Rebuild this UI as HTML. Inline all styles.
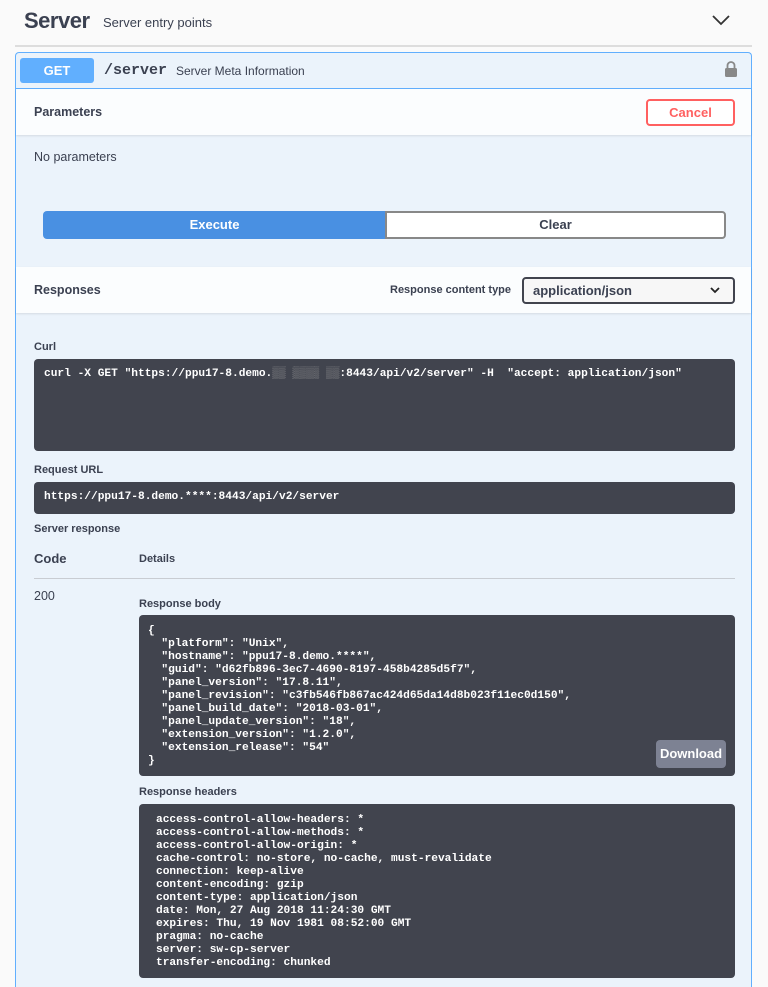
<!DOCTYPE html>
<html style="height:987px;overflow:hidden"><head><meta charset="utf-8"><style>
*{margin:0;padding:0;box-sizing:border-box}
body{width:768px;height:987px;background:#fafafa;font-family:"Liberation Sans",sans-serif;color:#3b4151;position:relative;overflow:hidden}
.a{position:absolute}
.mono{font-family:"Liberation Mono",monospace;font-weight:bold;font-size:11.2px;color:#fff;white-space:pre;line-height:13px}
.lbl{font-size:11.5px;font-weight:bold;color:#3b4151}
.box{background:#41444e;border-radius:4px}
</style></head><body>
<div class="a" style="left:24px;top:8px;font-size:22px;font-weight:bold;letter-spacing:-0.5px">Server</div>
<div class="a" style="left:103px;top:15px;font-size:13px">Server entry points</div>
<svg class="a" style="left:711px;top:13px" width="20" height="14"><path d="M2 3 L10 11 L18 3" fill="none" stroke="#333" stroke-width="1.8"/></svg>
<div class="a" style="left:15px;top:45px;width:737px;height:2px;background:#ddd"></div>
<div class="a" style="left:15px;top:52px;width:737px;height:935px;background:#ebf3fb;border:1px solid #61affe;border-bottom:none;border-radius:4px 4px 0 0"></div>
<div class="a" style="left:16px;top:88px;width:735px;height:1px;background:#61affe"></div>
<div class="a" style="left:20px;top:58px;width:74px;height:25px;background:#61affe;border-radius:3px;color:#fff;font-weight:bold;font-size:13px;text-align:center;line-height:25px">GET</div>
<div class="a" style="left:104px;top:62px;font-family:'Liberation Mono',monospace;font-weight:bold;font-size:15px">/server</div>
<div class="a" style="left:176px;top:64px;font-size:12px">Server Meta Information</div>
<svg class="a" style="left:724px;top:60px" width="14" height="18"><path d="M3.5 9 V5.5 A3.5 3.5 0 0 1 10.5 5.5 V9" fill="none" stroke="#888" stroke-width="1.8"/><rect x="1" y="8" width="12" height="9" rx="1.5" fill="#888"/></svg>
<div class="a" style="left:16px;top:89px;width:735px;height:46px;background:rgba(255,255,255,.8);box-shadow:0 1px 2px rgba(0,0,0,.1)"></div>
<div class="a lbl" style="left:34px;top:105px;font-size:12.5px">Parameters</div>
<div class="a" style="left:646px;top:99px;width:89px;height:27px;border:2px solid #ff6060;border-radius:4px;color:#ff6060;font-weight:bold;font-size:13px;text-align:center;line-height:23px;background:#fff">Cancel</div>
<div class="a" style="left:34px;top:150px;font-size:12.5px">No parameters</div>
<div class="a" style="left:43px;top:211px;width:343px;height:28px;background:#4990e2;border-radius:4px 0 0 4px;color:#fff;font-weight:bold;font-size:13px;text-align:center;line-height:28px">Execute</div>
<div class="a" style="left:385px;top:211px;width:341px;height:28px;background:#fff;border:2px solid #888;border-radius:0 4px 4px 0;color:#3b4151;font-weight:bold;font-size:13px;text-align:center;line-height:24px">Clear</div>
<div class="a" style="left:16px;top:267px;width:735px;height:46px;background:rgba(255,255,255,.8);box-shadow:0 1px 2px rgba(0,0,0,.1)"></div>
<div class="a lbl" style="left:34px;top:283px;font-size:12.5px">Responses</div>
<div class="a" style="left:390px;top:284px;font-size:11px;font-weight:bold">Response content type</div>
<div class="a" style="left:522px;top:277px;width:213px;height:27px;border:2px solid #41444e;border-radius:4px;background:#f7f7f7;font-size:13px;font-weight:bold;padding-left:9px;line-height:23px">application/json</div>
<svg class="a" style="left:709px;top:286px" width="12" height="8"><path d="M2 2 L6 6 L10 2" fill="none" stroke="#222" stroke-width="1.8"/></svg>
<div class="a lbl" style="left:34px;top:341px;font-size:11px">Curl</div>
<div class="a box" style="left:34px;top:359px;width:701px;height:92px"></div>
<div class="a mono" style="left:44px;top:368px">curl -X GET "https://ppu17-8.demo.<span style="color:#999">▒▒ ▒▒▒▒ ▒▒</span>:8443/api/v2/server" -H  "accept: application/json"</div>
<div class="a lbl" style="left:34px;top:464px;font-size:11px">Request URL</div>
<div class="a box" style="left:34px;top:482px;width:701px;height:32px"></div>
<div class="a mono" style="left:44px;top:491px">https://ppu17-8.demo.****:8443/api/v2/server</div>
<div class="a lbl" style="left:34px;top:523px;font-size:11px">Server response</div>
<div class="a" style="left:34px;top:551px;font-size:13px;font-weight:bold">Code</div>
<div class="a lbl" style="left:139px;top:553px;font-size:11px">Details</div>
<div class="a" style="left:34px;top:578px;width:701px;height:1px;background:#c8ccd2"></div>
<div class="a" style="left:34px;top:589px;font-size:12.5px">200</div>
<div class="a lbl" style="left:139px;top:598px;font-size:11px">Response body</div>
<div class="a box" style="left:139px;top:615px;width:596px;height:161px"></div>
<div class="a mono" style="left:148px;top:625px">{
  "platform": "Unix",
  "hostname": "ppu17-8.demo.****",
  "guid": "d62fb896-3ec7-4690-8197-458b4285d5f7",
  "panel_version": "17.8.11",
  "panel_revision": "c3fb546fb867ac424d65da14d8b023f11ec0d150",
  "panel_build_date": "2018-03-01",
  "panel_update_version": "18",
  "extension_version": "1.2.0",
  "extension_release": "54"
}</div>
<div class="a" style="left:656px;top:740px;width:70px;height:28px;background:#7d8293;border-radius:4px;color:#fff;font-weight:bold;font-size:13px;text-align:center;line-height:28px">Download</div>
<div class="a lbl" style="left:139px;top:786px;font-size:11px">Response headers</div>
<div class="a box" style="left:139px;top:804px;width:596px;height:174px"></div>
<div class="a mono" style="left:156px;top:814px">access-control-allow-headers: *
access-control-allow-methods: *
access-control-allow-origin: *
cache-control: no-store, no-cache, must-revalidate
connection: keep-alive
content-encoding: gzip
content-type: application/json
date: Mon, 27 Aug 2018 11:24:30 GMT
expires: Thu, 19 Nov 1981 08:52:00 GMT
pragma: no-cache
server: sw-cp-server
transfer-encoding: chunked</div>
</body></html>
